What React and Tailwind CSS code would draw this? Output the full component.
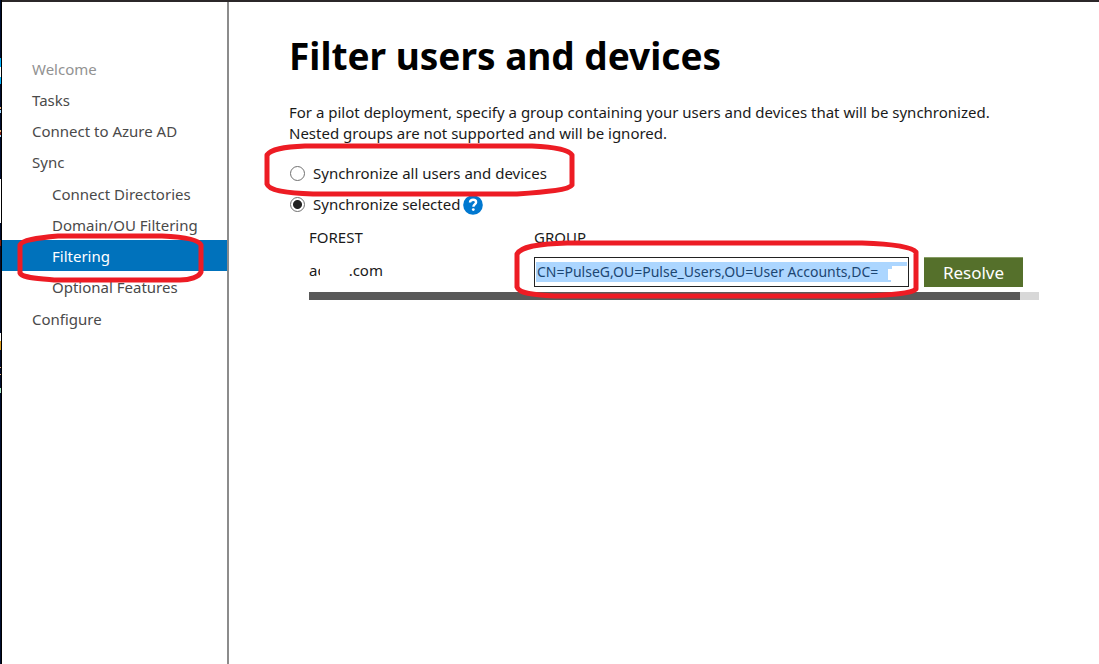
import React, { useState } from 'react';
import { clsx } from 'clsx';

const steps = [
  { name: 'Welcome', done: true },
  { name: 'Tasks' },
  { name: 'Connect to Azure AD' },
  {
    name: 'Sync',
    children: ['Connect Directories', 'Domain/OU Filtering', 'Filtering', 'Optional Features'],
  },
  { name: 'Configure' },
];

// hand drawn red marker, stretched over whatever it wraps
const Marker = ({ className, viewBox, d }) => (
  <svg
    className={clsx('pointer-events-none absolute z-10 overflow-visible', className)}
    viewBox={viewBox}
    preserveAspectRatio="none"
    fill="none"
    aria-hidden="true"
  >
    <path d={d} stroke="#ed1c24" strokeWidth="5" strokeLinejoin="round" vectorEffect="non-scaling-stroke" />
  </svg>
);

// sliver of the desktop that shows behind the window
const DesktopEdge = () => (
  <svg className="w-[2px] shrink-0 bg-[#000d2e]" viewBox="0 0 2 664" preserveAspectRatio="xMinYMin slice" shapeRendering="crispEdges" aria-hidden="true">
    <path fill="#00b4ff" d="M0 58h1v9H0zM0 77h1v7H0z" />
    <path fill="#fff" d="M0 67h1v10H0zM0 179h1v44H0zM0 333h1v8H0z" />
    <path fill="#e8b27a" d="M0 107h1v2H0zM0 130h1v2H0zM0 367h1v1H0zM0 374h1v1H0z" />
    <path fill="#7a1c14" d="M0 132h1v3H0zM0 240h1v6H0z" />
    <path fill="#9ed8ff" d="M0 110h1v3H0zM0 135h1v2H0z" />
    <path fill="#d99a1c" d="M0 341h1v9H0z" />
    <path fill="#a6e8c8" d="M0 388h1v5H0z" />
    <path fill="#000" d="M1 0h1v664H1z" />
  </svg>
);

const NavLink = ({ name, sub, done, active }) => (
  <a
    href="#"
    aria-current={active ? 'step' : undefined}
    className={clsx(
      'relative flex h-[31px] items-center pt-px text-[15px]',
      sub ? 'pl-[50px]' : 'pl-[30px]',
      active ? 'bg-[#0072bc] text-white' : done ? 'text-[#929292]' : 'text-[#4a4a4a]'
    )}
  >
    {name}
    {active && (
      <Marker
        className="-top-1 left-[18px] h-11 w-[181px]"
        viewBox="0 0 181 44"
        d="M0 9 C2 4 16 2 38 0 H142 C165 1 179 4 181 9 V36 C179 41 170 44 160 44 H34 C16 42 2 42 0 37 Z"
      />
    )}
  </a>
);

const Sidebar = () => (
  <nav className="w-[227px] shrink-0 border-r-2 border-[#8c8c8c] pt-[51px]">
    <ul>
      {steps.map((step) => (
        <li key={step.name}>
          <NavLink name={step.name} done={step.done} />
          {step.children && (
            <ul className="py-px">
              {step.children.map((child) => (
                <li key={child}>
                  <NavLink name={child} sub active={child === 'Filtering'} />
                </li>
              ))}
            </ul>
          )}
        </li>
      ))}
    </ul>
  </nav>
);

const Radio = ({ label, ...props }) => (
  <label className="flex items-center gap-2">
    <input
      type="radio"
      name="scope"
      className="ml-px h-[15px] w-[15px] appearance-none rounded-full border border-[#707070] bg-white bg-[radial-gradient(circle,#222_4px,transparent_5px)] bg-center not-checked:bg-none"
      {...props}
    />
    {label}
  </label>
);

const HelpIcon = () => (
  <svg className="h-5 w-5" viewBox="0 0 20 20" aria-hidden="true">
    <circle cx="10" cy="10" r="9.8" fill="#0078d0" />
    <path d="M7 7.6C7 5.6 8.3 4.7 10.1 4.7c1.8 0 3 .9 3 2.5 0 2.2-2.7 2.3-2.7 4.6" fill="none" stroke="#fff" strokeWidth="2.4" />
    <circle cx="10.3" cy="14.6" r="1.4" fill="#fff" />
  </svg>
);

const GroupTable = () => {
  const [group, setGroup] = useState('CN=PulseG,OU=Pulse_Users,OU=User Accounts,DC=');
  return (
    <div className="mt-[2px] ml-5">
      <table className="w-full table-fixed text-left">
        <thead>
          <tr className="h-[30px]">
            <th className="w-[225px] font-normal">FOREST</th>
            <th className="font-normal">GROUP</th>
            <th className="w-[115px]"></th>
          </tr>
        </thead>
        <tbody>
          <tr className="h-10">
            <td className="pb-1">
              <span className="relative inline-flex items-center gap-6">
                <span>ac</span>
                <span>.com</span>
                {/* middle of the domain is blanked out */}
                <svg className="absolute left-[11px] h-5 w-6" viewBox="0 0 24 20" aria-hidden="true">
                  <path d="M0 0H24V20H0z" fill="#fff" />
                </svg>
              </span>
            </td>
            <td className="pr-[15px]">
              <div className="relative border border-[#222] px-px py-1">
                <input
                  type="text"
                  aria-label="Group"
                  value={group}
                  onChange={(e) => setGroup(e.target.value)}
                  className="block h-5 w-full bg-[#acd6ff] pl-px text-[14px] leading-5 text-[#1c4672] outline-none"
                />
                <svg className="absolute top-2 right-0 h-4 w-5" viewBox="0 0 20 16" aria-hidden="true">
                  <path d="M4 0H20V16H3V14H0V3H4z" fill="#fff" />
                </svg>
                <Marker
                  className="-top-[15px] -left-[18px] h-[53px] w-[399px]"
                  viewBox="0 0 399 53"
                  d="M0 11 C4 4 18 1 50 0 H345 C375 1 395 4 399 9 V46 C395 50 380 52 345 53 H38 C14 52 2 50 0 44 Z"
                />
              </div>
            </td>
            <td>
              <button type="button" className="block h-[30px] w-[99px] border-t border-[#869c64] bg-[#55702b] text-[17px] text-white">
                Resolve
              </button>
            </td>
          </tr>
        </tbody>
      </table>
      <div className="flex h-2 bg-[#d8d8d8]">
        <div className="mr-[19px] grow bg-[#595959]"></div>
      </div>
    </div>
  );
};

const App = () => {
  const [scope, setScope] = useState('selected');
  return (
    <div className="flex min-h-screen bg-white font-['Noto_Sans',sans-serif]">
      <DesktopEdge />
      <div className="flex grow border-t-2 border-[#2b2729]">
        <Sidebar />
        <main className="grow pt-7 pr-[60px] pl-[60px] text-[15px] text-[#1a1a1a]">
          <h1 className="text-[37px] leading-[52px] font-bold text-black">Filter users and devices</h1>
          <p className="mt-5 leading-[21px]">
            For a pilot deployment, specify a group containing your users and devices that will be synchronized.
            <br />
            Nested groups are not supported and will be ignored.
          </p>
          <fieldset className="mt-[14px]">
            <div className="relative flex h-[31px] w-fit items-center">
              <Radio label="Synchronize all users and devices" checked={scope === 'all'} onChange={() => setScope('all')} />
              <Marker
                className="-top-3 -left-[22px] h-12 w-[305px]"
                viewBox="0 0 305 48"
                d="M0 9 C4 3 16 1 38 0 H265 C290 1 302 4 305 9 V39 C302 44 280 46 250 48 H46 C16 47 2 44 0 38 Z"
              />
            </div>
            <div className="flex h-[31px] items-center">
              <Radio label="Synchronize selected" checked={scope === 'selected'} onChange={() => setScope('selected')} />
              <button type="button" aria-label="Help" className="ml-[3px]">
                <HelpIcon />
              </button>
            </div>
          </fieldset>
          <GroupTable />
        </main>
      </div>
    </div>
  );
};

export default App;
